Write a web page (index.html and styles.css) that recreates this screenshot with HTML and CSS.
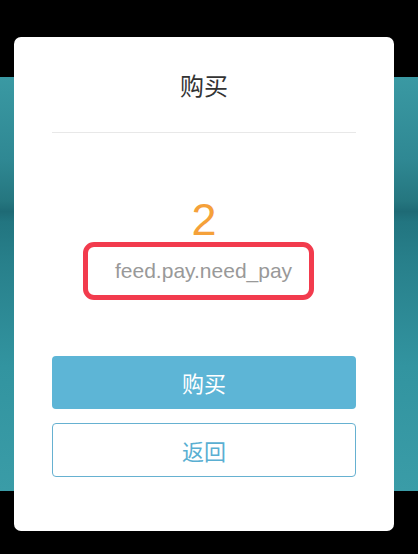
FILE: index.html
```html
<!DOCTYPE html>
<html lang="zh">
<head>
<meta charset="utf-8">
<title>购买</title>
<link rel="stylesheet" href="styles.css">
</head>
<body>
<div class="screen">
  <div class="band"></div>
</div>
<div class="modal">
  <div class="modal-title">购买</div>
  <div class="amount">2</div>
  <div class="need-pay">feed.pay.need_pay</div>
  <div class="btn btn-primary">购买</div>
  <div class="btn btn-outline">返回</div>
</div>
</body>
</html>
```
FILE: styles.css
```css
html, body {
  margin: 0;
  padding: 0;
  background: #000;
}
body {
  width: 418px;
  height: 554px;
  overflow: hidden;
  position: relative;
  font-family: "Liberation Sans", "Noto Sans CJK SC", sans-serif;
}
.screen {
  padding-top: 77px;
}
.band {
  height: 414px;
  background: linear-gradient(to bottom,
    #3a99a3 0%,
    #2f8893 20%,
    #25767f 30%,
    #1e6a75 32.5%,
    #227580 35%,
    #28808b 45%,
    #3294a0 70%,
    #3a9ca7 100%);
}
.modal {
  position: absolute;
  top: 37px;
  left: 14px;
  width: 380px;
  height: 494px;
  box-sizing: border-box;
  padding: 0 38px;
  background: #fff;
  border-radius: 7px;
  display: flex;
  flex-direction: column;
}
.modal-title {
  height: 95px;
  line-height: 95px;
  text-align: center;
  font-size: 24px;
  color: #333;
  border-bottom: 1px solid #e8e8e8;
  font-family: "Noto Sans CJK SC", sans-serif;
}
.amount {
  margin-top: 64px;
  height: 45px;
  line-height: 45px;
  font-size: 45px;
  text-align: center;
  color: #f5a13a;
}
.need-pay {
  align-self: flex-start;
  margin-left: 31px;
  width: 231px;
  height: 58px;
  box-sizing: border-box;
  border: 5px solid #f23b4d;
  border-radius: 11px;
  padding-left: 27px;
  line-height: 48px;
  font-size: 21px;
  color: #999;
  white-space: nowrap;
}
.btn {
  box-sizing: border-box;
  border-radius: 4px;
  text-align: center;
  font-size: 22px;
  font-family: "Noto Sans CJK SC", sans-serif;
}
.btn-primary {
  margin-top: 56px;
  height: 53px;
  line-height: 53px;
  background: #5db5d6;
  color: #fff;
}
.btn-outline {
  margin-top: 14px;
  height: 54px;
  line-height: 52px;
  border: 1px solid #66b1d1;
  color: #5aafd2;
  background: #fff;
}
```
